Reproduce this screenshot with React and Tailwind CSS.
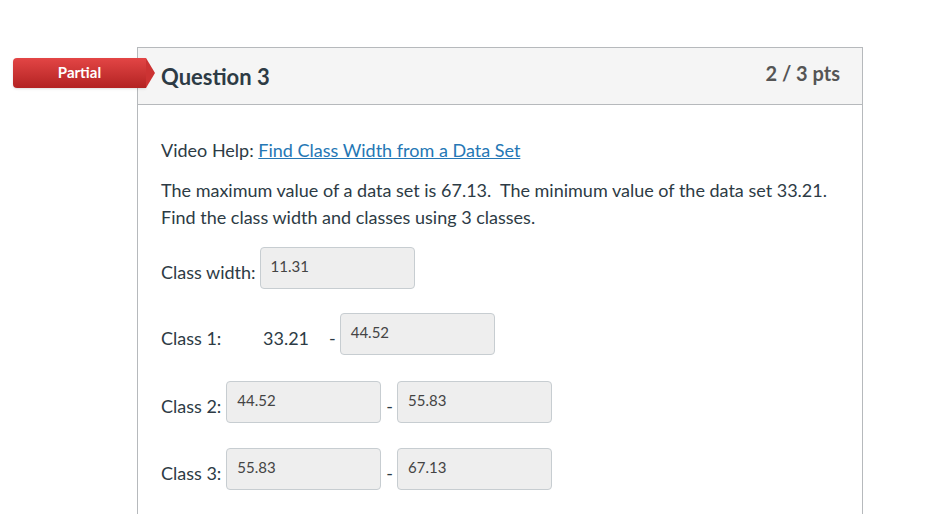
export default function App() {
  const inputCls =
    "h-[42px] w-[155px] rounded border border-[#c7cdd1] bg-[#eeeeee] px-[10px] pt-[11px] text-[15px] text-[#444] leading-none";

  return (
    <div
      className="min-h-screen bg-white pt-[47px] text-[#2d3b45]"
      style={{ fontFamily: "Lato, 'Liberation Sans', sans-serif" }}
    >
      <div className="flex">
        {/* badge column */}
        <div className="w-[137px] shrink-0 pl-[13px] pt-[11px]">
          <div className="relative flex h-[30px] w-[133px] items-center justify-center rounded-l-sm bg-gradient-to-b from-[#e34545] to-[#b32222] shadow-sm">
            <span className="pb-[2px] text-[15px] font-bold text-white">Partial</span>
            <div className="absolute right-[-9px] top-0 h-0 w-0 border-y-[15px] border-l-[9px] border-y-transparent border-l-[#cc3333]" />
          </div>
        </div>

        {/* question card */}
        <div className="w-[726px] border border-b-0 border-[#b6b9bc]">
          <div className="flex h-[57px] items-start justify-between border-b border-[#b6b9bc] bg-[#f5f5f5] pl-[23px] pr-[22px]">
            <h2 className="pt-[14px] text-[22px] leading-[30px] font-bold">Question 3</h2>
            <div className="pt-[11px] text-[20px] leading-[28px] font-bold text-[#555]">2 / 3 pts</div>
          </div>

          <div className="pl-[23px] pr-[20px] pt-[32px] pb-[30px] text-[18px]">
            <p className="leading-[26px]">
              Video Help:{" "}
              <a href="#" className="text-[#2577b5] underline">
                Find Class Width from a Data Set
              </a>
            </p>
            <p className="mt-[14px] leading-[27px]">
              The maximum value of a data set is 67.13.&nbsp; The minimum value of the data set 33.21.
              <br />
              Find the class width and classes using 3 classes.
            </p>

            <div className="mt-[16px] flex items-center">
              <span className="pt-[8px] pr-[4px]">Class width:</span>
              <div className={inputCls}>11.31</div>
            </div>

            <div className="mt-[24px] flex items-center">
              <span className="w-[102px] pt-[8px]">Class 1:</span>
              <span className="pt-[8px]">33.21</span>
              <span className="pl-[20px] pr-[4px] pt-[8px]">-</span>
              <div className={inputCls}>44.52</div>
            </div>

            <div className="mt-[26px] flex items-center">
              <span className="pt-[8px] pr-[5px]">Class 2:</span>
              <div className={inputCls}>44.52</div>
              <span className="pl-[5px] pr-[4px] pt-[8px]">-</span>
              <div className={inputCls}>55.83</div>
            </div>

            <div className="mt-[25px] flex items-center">
              <span className="pt-[8px] pr-[5px]">Class 3:</span>
              <div className={inputCls}>55.83</div>
              <span className="pl-[5px] pr-[4px] pt-[8px]">-</span>
              <div className={inputCls}>67.13</div>
            </div>
          </div>
        </div>
      </div>
    </div>
  );
}
